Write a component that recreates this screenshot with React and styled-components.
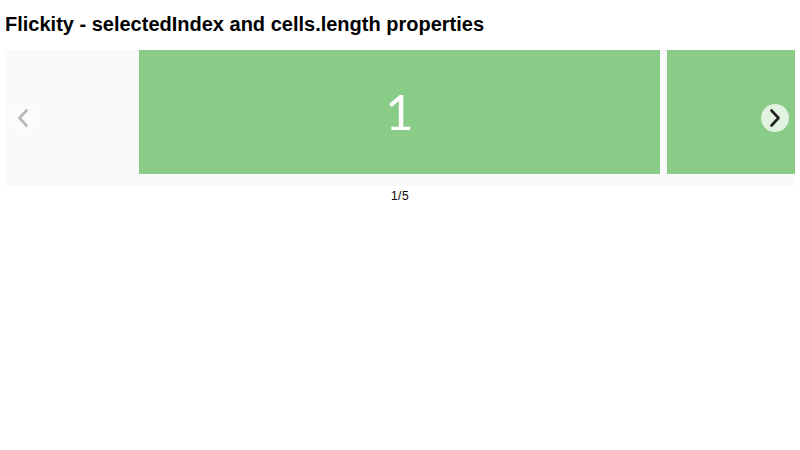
import React from "react";
import styled, { createGlobalStyle } from "styled-components";

const Global = createGlobalStyle`
  html, body { margin: 0; padding: 0; background: #fff; }
  body { font-family: "Liberation Sans", Arial, sans-serif; color: #000; }
  #root { padding: 0 5px; }
`;

const Title = styled.h1`
  margin: 0;
  padding-top: 13px;
  height: 50px;
  box-sizing: border-box;
  font-size: 20px;
  line-height: 23px;
  font-weight: bold;
`;

const Gallery = styled.div`
  position: relative;
  height: 136px;
  background: #fafafa;
  overflow: hidden;
`;

const Track = styled.div`
  display: flex;
  gap: 7px;
  padding-left: 134px;
`;

const Cell = styled.div`
  flex: 0 0 521px;
  height: 124px;
  background: #8c8;
  color: #fff;
  display: flex;
  align-items: center;
  justify-content: center;
  font-family: Lato, sans-serif;
  font-weight: 400;
  font-size: 49px;
  line-height: 1;
  padding-bottom: 1px;
  box-sizing: border-box;
`;

const NavButton = styled.button`
  position: absolute;
  top: 50%;
  transform: translateY(-50%);
  ${(p) => (p.$side === "left" ? "left: 4px;" : "right: 6px;")}
  width: 28px;
  height: 28px;
  border: none;
  border-radius: 50%;
  padding: 0;
  background: rgba(255, 255, 255, 0.75);
  display: flex;
  align-items: center;
  justify-content: center;
  opacity: ${(p) => (p.disabled ? 0.3 : 1)};
  cursor: pointer;
`;

const Status = styled.p`
  margin: 0;
  padding-top: 3px;
  text-align: center;
  font-size: 12px;
  line-height: 14px;
  letter-spacing: 0.5px;
  color: #000;
`;

const Chevron = ({ dir }) => (
  <svg width="12" height="18" viewBox="0 0 12 18">
    <path
      d={dir === "left" ? "M9.5 1.5 L2.5 9 L9.5 16.5" : "M2.5 1.5 L9.5 9 L2.5 16.5"}
      fill="none"
      stroke="#222"
      strokeWidth="2.6"
      strokeLinecap="round"
      strokeLinejoin="round"
    />
  </svg>
);

export default function App() {
  const cells = [1, 2, 3, 4, 5];
  return (
    <>
      <Global />
      <Title>Flickity - selectedIndex and cells.length properties</Title>
      <Gallery>
        <Track>
          {cells.map((n, i) => (
            <Cell key={n}>{i === 0 ? n : ""}</Cell>
          ))}
        </Track>
        <NavButton $side="left" disabled aria-label="previous">
          <Chevron dir="left" />
        </NavButton>
        <NavButton $side="right" aria-label="next">
          <Chevron dir="right" />
        </NavButton>
      </Gallery>
      <Status>1/5</Status>
    </>
  );
}
